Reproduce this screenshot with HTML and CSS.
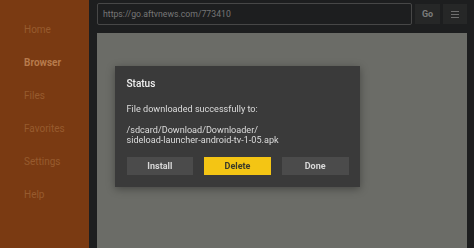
FILE: index.html
```html
<!DOCTYPE html>
<html>
<head>
<meta charset="utf-8">
<link rel="stylesheet" href="styles.css">
</head>
<body>
<div class="app">
  <nav class="sidebar">
    <div class="nav-item">Home</div>
    <div class="nav-item active">Browser</div>
    <div class="nav-item">Files</div>
    <div class="nav-item">Favorites</div>
    <div class="nav-item">Settings</div>
    <div class="nav-item">Help</div>
  </nav>
  <main class="main">
    <div class="toolbar">
      <div class="url">https://go.aftvnews.com/773410</div>
      <div class="tbtn go">Go</div>
      <div class="tbtn menu">
        <svg width="10" height="9" viewBox="0 0 10 9"><path d="M1 1.5H9M1 4.5H9M1 7.5H9" stroke="#6f6f6f" stroke-width="1.2"/></svg>
      </div>
    </div>
    <div class="page"></div>
  </main>
</div>
<div class="overlay">
  <div class="dialog">
    <div class="title">Status</div>
    <div class="msg">File downloaded successfully to:</div>
    <div class="path">/sdcard/Download/Downloader/<br>sideload-launcher-android-tv-1-05.apk</div>
    <div class="buttons">
      <div class="btn">Install</div>
      <div class="btn primary">Delete</div>
      <div class="btn">Done</div>
    </div>
  </div>
</div>
</body>
</html>
```
FILE: styles.css
```css
* { box-sizing: border-box; }
html, body { margin: 0; padding: 0; }
body {
  width: 474px;
  height: 248px;
  overflow: hidden;
  font-family: Roboto, "Liberation Sans", sans-serif;
  background: #1d1e1f;
}
.app {
  display: flex;
  width: 474px;
  height: 248px;
}
.sidebar {
  width: 89px;
  flex: none;
  background: #7a3a12;
  display: flex;
  flex-direction: column;
  padding-top: 23px;
  padding-left: 24px;
}
.nav-item {
  height: 33px;
  line-height: 14px;
  font-size: 10px;
  color: #975a2e;
}
.nav-item.active {
  color: #b77a4c;
  font-weight: 700;
}
.main {
  flex: 1;
  display: flex;
  flex-direction: column;
  background: #1d1e1f;
  padding: 3px 7px 0 8px;
}
.toolbar {
  display: flex;
  align-items: center;
  gap: 3px;
  height: 22px;
}
.url {
  flex: 1;
  height: 22px;
  border: 1px solid #474747;
  border-radius: 2px;
  color: #777777;
  font-size: 8.7px;
  line-height: 20px;
  padding-left: 5px;
}
.tbtn {
  height: 20px;
  width: 25px;
  background: #262727;
  color: #7c7c7c;
  font-size: 9px;
  font-weight: 700;
  display: flex;
  align-items: center;
  justify-content: center;
}
.tbtn.menu { width: 24px; }
.page {
  flex: 1;
  margin-top: 8px;
  background: #6b6c67;
}
.overlay {
  position: fixed;
  inset: 0;
  display: flex;
  align-items: center;
  justify-content: center;
  padding-top: 5px;
}
.dialog {
  width: 245px;
  height: 121px;
  background: #3a3a3a;
  box-shadow: 0 2px 8px rgba(0,0,0,0.35);
  padding: 12px 11px 12px 12px;
  color: #e6e6e6;
}
.title {
  font-size: 10px;
  font-weight: 500;
  line-height: 12px;
  color: #f2f2f2;
}
.msg {
  margin-top: 12.5px;
  font-size: 9.1px;
  line-height: 12px;
  color: #dcdcdc;
}
.path {
  margin-top: 10.5px;
  font-size: 9.1px;
  line-height: 10px;
  color: #dcdcdc;
}
.buttons {
  margin-top: 12px;
  display: flex;
  gap: 11px;
}
.btn {
  flex: 1;
  height: 18px;
  background: #4b4b4b;
  color: #d8d8d8;
  font-size: 9px;
  font-weight: 700;
  display: flex;
  align-items: center;
  justify-content: center;
}
.btn.primary {
  background: #f4c514;
  color: #3a3a2a;
}
```
